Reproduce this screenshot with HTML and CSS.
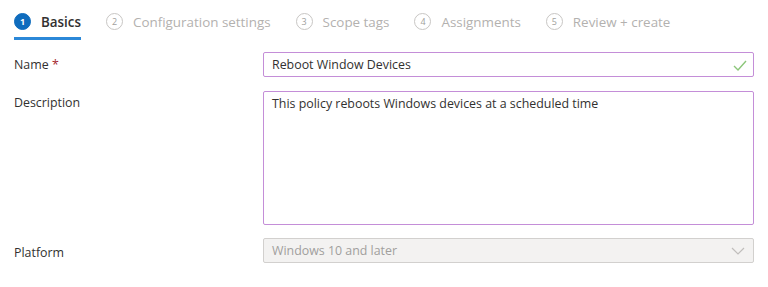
FILE: index.html
```html
<!DOCTYPE html>
<html>
<head>
<meta charset="utf-8">
<link rel="stylesheet" href="styles.css">
</head>
<body>
<div class="tabs">
  <div class="tab active"><span class="num">1</span><span class="label">Basics</span></div>
  <div class="tab"><span class="num">2</span><span class="label">Configuration settings</span></div>
  <div class="tab"><span class="num">3</span><span class="label">Scope tags</span></div>
  <div class="tab"><span class="num">4</span><span class="label">Assignments</span></div>
  <div class="tab"><span class="num">5</span><span class="label">Review + create</span></div>
</div>
<div class="form">
  <div class="row row-name">
    <div class="field-label">Name <span class="req">*</span></div>
    <div class="input">
      <span class="value">Reboot Window Devices</span>
      <svg class="check" width="14" height="11" viewBox="0 0 14 11"><path d="M1 6 L5 10 L13 1" fill="none" stroke="#8cc67a" stroke-width="1.4"/></svg>
    </div>
  </div>
  <div class="row row-desc">
    <div class="field-label">Description</div>
    <div class="textarea">This policy reboots Windows devices at a scheduled time</div>
  </div>
  <div class="row row-platform">
    <div class="field-label">Platform</div>
    <div class="select">
      <span class="value">Windows 10 and later</span>
      <svg class="chev" width="14" height="8" viewBox="0 0 14 8"><path d="M1 1 L7 7 L13 1" fill="none" stroke="#c0bebc" stroke-width="1.2"/></svg>
    </div>
  </div>
</div>
</body>
</html>
```
FILE: styles.css
```css
* { box-sizing: border-box; }
body {
  margin: 0;
  background: #ffffff;
  font-family: "Open Sans", "Noto Sans", sans-serif;
  color: #323130;
  font-size: 12.4px;
}
.tabs {
  display: flex;
  align-items: stretch;
  height: 40px;
  padding-left: 14px;
  gap: 25px;
}
.tab {
  display: flex;
  align-items: center;
  gap: 10px;
  color: #b3b1af;
  font-size: 13.4px;
  border-bottom: 3px solid transparent;
  padding-top: 6px;
}
.tab.active {
  color: #323130;
  font-weight: 600;
  border-bottom-color: #2b88d8;
}
.num {
  width: 17px;
  height: 17px;
  border-radius: 50%;
  border: 1px solid #c8c6c4;
  display: flex;
  align-items: center;
  justify-content: center;
  font-size: 9px;
  font-weight: 400;
  color: #a19f9d;
}
.tab.active .num {
  background: #0f6cbd;
  border-color: #0f6cbd;
  color: #ffffff;
  font-weight: 700;
}
.form {
  padding: 12px 14px 0 14px;
}
.row {
  display: flex;
  align-items: flex-start;
}
.field-label {
  width: 249px;
  flex: none;
  color: #323130;
}
.req { color: #a4262c; }
.row-name { height: 39px; }
.row-name .field-label { line-height: 25px; }
.input {
  width: 491px;
  height: 25px;
  border: 1px solid #c48ed8;
  border-radius: 2px;
  display: flex;
  align-items: center;
  justify-content: space-between;
  padding: 0 6px 0 8px;
}
.row-desc { height: 147px; }
.row-desc .field-label { padding-top: 3px; }
.textarea {
  width: 491px;
  height: 134px;
  border: 1px solid #c48ed8;
  border-radius: 2px;
  padding: 3px 8px;
  line-height: 18px;
}
.row-platform .field-label { line-height: 25px; padding-top: 2px; }
.select {
  width: 491px;
  height: 25px;
  border: 1px solid #d2d0ce;
  background: #f3f2f1;
  border-radius: 2px;
  display: flex;
  align-items: center;
  justify-content: space-between;
  padding: 0 8px 0 8px;
  color: #a19f9d;
}
.check { margin-top: 1px; }
```
